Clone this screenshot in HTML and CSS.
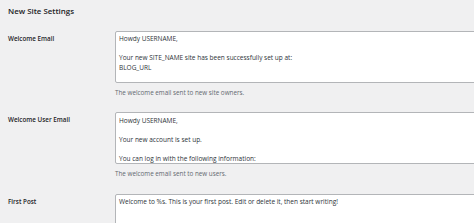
FILE: index.html
```html
<!DOCTYPE html>
<html lang="en">
<head>
    <meta charset="UTF-8">
    <title>Network Settings</title>
    <link rel="stylesheet" href="styles.css">
</head>
<body>
<div class="wrap">
    <h2 class="section-title">New Site Settings</h2>

    <div class="form-table">
        <div class="row">
            <label class="row-label" for="welcome_email">Welcome Email</label>
            <div class="row-field">
                <textarea id="welcome_email" class="large-text" rows="5">Howdy USERNAME,

Your new SITE_NAME site has been successfully set up at:
BLOG_URL

You can log in to the administrator account with the following information:

Username: USERNAME</textarea>
                <p class="description">The welcome email sent to new site owners.</p>
            </div>
        </div>

        <div class="row">
            <label class="row-label" for="welcome_user_email">Welcome User Email</label>
            <div class="row-field">
                <textarea id="welcome_user_email" class="large-text" rows="5">Howdy USERNAME,

Your new account is set up.

You can log in with the following information:
Username: USERNAME
Password: PASSWORD
LOGINLINK

Thanks!</textarea>
                <p class="description">The welcome email sent to new users.</p>
            </div>
        </div>

        <div class="row">
            <label class="row-label" for="first_post">First Post</label>
            <div class="row-field">
                <textarea id="first_post" class="large-text" rows="5">Welcome to %s. This is your first post. Edit or delete it, then start writing!</textarea>
            </div>
        </div>
    </div>
</div>
</body>
</html>
```

FILE: styles.css
```css
html, body {
    margin: 0;
    padding: 0;
    overflow: hidden;
}
body {
    background: #f0f0f1;
    color: #1d2327;
    font-family: "Open Sans", "Noto Sans", sans-serif;
}
.wrap {
    padding: 6px 0 0 8px;
}

.section-title {
    margin: 0;
    font-size: 7.9px;
    line-height: 10px;
    font-weight: 600;
    color: #1d2327;
}

.form-table {
    display: flex;
    flex-direction: column;
    gap: 15px;
    padding-top: 14.5px;
}
.row {
    display: grid;
    grid-template-columns: 107px 380px;
}
.row-label {
    padding-top: 3px;
    font-size: 6.3px;
    line-height: 10px;
    font-weight: 600;
    color: #1d2327;
}

.large-text {
    display: block;
    box-sizing: border-box;
    width: 100%;
    height: 52px;
    margin: 0;
    padding: 2.5px 3px;
    border: 1px solid #b3b5b8;
    border-radius: 2px;
    background: #fff;
    color: #2c3338;
    font-family: "Open Sans", "Noto Sans", sans-serif;
    font-size: 6.5px;
    line-height: 9.5px;
    resize: none;
    overflow: hidden;
}

.description {
    margin: 5px 0 0;
    font-size: 6.3px;
    line-height: 9.5px;
    color: #646970;
}
```
